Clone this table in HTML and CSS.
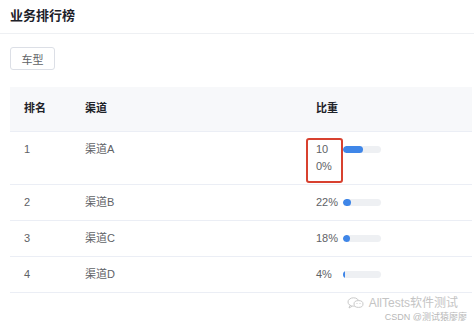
FILE: index.html
```html
<!DOCTYPE html>
<html lang="zh">
<head>
<meta charset="utf-8">
<link rel="stylesheet" href="styles.css">
</head>
<body>
<div class="card">
  <div class="card-head">业务排行榜</div>
  <div class="card-body">
    <div class="filters"><button class="btn">车型</button></div>
    <table class="rank">
      <colgroup><col class="c1"><col class="c2"><col class="c3"></colgroup>
      <thead>
        <tr><th>排名</th><th>渠道</th><th>比重</th></tr>
      </thead>
      <tbody>
        <tr><td>1</td><td>渠道A</td><td><div class="pct"><span class="num marked">100%</span><span class="bar"><span class="fill" style="width:20px"></span></span></div></td></tr>
        <tr><td>2</td><td>渠道B</td><td><div class="pct"><span class="num">22%</span><span class="bar"><span class="fill" style="width:8px"></span></span></div></td></tr>
        <tr><td>3</td><td>渠道C</td><td><div class="pct"><span class="num">18%</span><span class="bar"><span class="fill" style="width:7px"></span></span></div></td></tr>
        <tr><td>4</td><td>渠道D</td><td><div class="pct"><span class="num">4%</span><span class="bar"><span class="fill thin" style="width:2px"></span></span></div></td></tr>
      </tbody>
    </table>
  </div>
  <div class="watermark">
    <div class="wm-main">
      <svg class="wm-icon" width="18" height="12" viewBox="0 0 18 12" fill="none" stroke="#c9c9c9" stroke-width="1">
        <ellipse cx="6.5" cy="5" rx="5.5" ry="4.2"/>
        <path d="M3 8.5 L2 11 L5 9.3"/>
        <ellipse cx="11.5" cy="7" rx="4.5" ry="3.4" fill="#fff"/>
        <circle cx="10" cy="6.5" r="0.6" fill="#c9c9c9" stroke="none"/>
        <circle cx="13" cy="6.5" r="0.6" fill="#c9c9c9" stroke="none"/>
      </svg>
      <span>AllTests软件测试</span>
    </div>
    <div class="wm-sub">CSDN @测试猿廖廖</div>
  </div>
</div>
</body>
</html>
```
FILE: styles.css
```css
* { box-sizing: border-box; }
html, body { margin: 0; padding: 0; background: #fff; }
body {
  font-family: "Liberation Sans", "Noto Sans CJK SC", sans-serif;
  color: #606266;
  width: 474px;
  height: 323px;
  overflow: hidden;
}
.card { position: relative; height: 323px; }
.card-head {
  height: 34px;
  padding: 7px 10px 0;
  font-size: 13px;
  line-height: 18px;
  font-weight: 600;
  color: #1d2129;
  border-bottom: 1px solid #eef0f3;
}
.card-body { padding: 13px 2px 0 10px; }
.filters { display: flex; margin-bottom: 17px; }
.btn {
  font-family: inherit;
  width: 45px;
  height: 23px;
  padding: 0;
  font-size: 11px;
  color: #606266;
  background: #fff;
  border: 1px solid #dcdfe6;
  border-radius: 3px;
}
.rank {
  width: 100%;
  border-collapse: collapse;
  table-layout: fixed;
  font-size: 11px;
  line-height: 17px;
}
.c1 { width: 61px; }
.c2 { width: 231px; }
.rank th {
  background: #f7f8fa;
  text-align: left;
  font-weight: 600;
  color: #1f2329;
  padding: 13px 14px 14px;
  border-bottom: 1px solid #ebeef5;
}
.rank td {
  padding: 9px 14px 9px;
  border-bottom: 1px solid #ebeef5;
  vertical-align: top;
}
.num { width: 27px; word-break: break-all; position: relative; }
.pct { display: flex; align-items: flex-start; }
.marked::after {
  content: "";
  position: absolute;
  left: -10px;
  top: -3px;
  width: 33px;
  height: 41px;
  border: 2px solid #d8412f;
  border-radius: 3px;
}
.bar {
  display: block;
  width: 38px;
  height: 7px;
  margin-top: 5px;
  background: #eef0f3;
  border-radius: 4px;
  overflow: hidden;
}
.fill { display: block; height: 100%; background: #3f86e8; border-radius: 4px; }
.fill.thin { border-radius: 0; }
.watermark {
  position: absolute;
  right: 7px;
  top: 296px;
  display: flex;
  flex-direction: column;
  align-items: flex-end;
  color: #c4c4c4;
}
.wm-main {
  display: flex;
  align-items: center;
  gap: 4px;
  margin-right: 9px;
  font-size: 12px;
  line-height: 14px;
}
.wm-sub { font-size: 9px; line-height: 10px; margin-top: 2px; color: #b8b8b8; }
```
